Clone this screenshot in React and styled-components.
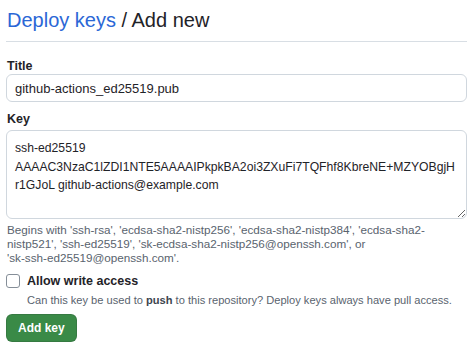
import React from "react";
import styled, { createGlobalStyle } from "styled-components";

const Global = createGlobalStyle`
  html, body { margin: 0; padding: 0; background: #ffffff; }
  body { font-family: "Liberation Sans", Arial, Helvetica, sans-serif; color: #1f2328; }
  * { box-sizing: border-box; }
`;

const Page = styled.div`
  width: 474px;
  padding: 0 7px 0 6px;
`;

const Header = styled.div`
  padding: 8px 0 9px 1px;
  border-bottom: 1px solid #d8dee4;
`;

const Heading = styled.h2`
  margin: 0;
  font-size: 20px;
  line-height: 24px;
  font-weight: 400;
  color: #1f2328;
`;

const Crumb = styled.a`
  color: #2b67d6;
  text-decoration: none;
`;

const Form = styled.form`
  display: flex;
  flex-direction: column;
  padding-top: 17px;
`;

const Group = styled.div`
  display: flex;
  flex-direction: column;
  margin-top: ${(p) => p.$top || 0}px;
`;

const Label = styled.label`
  font-size: 12.5px;
  line-height: 14px;
  font-weight: 700;
  color: #1f2328;
  padding-left: 1px;
  margin-bottom: ${(p) => p.$gap || 1}px;
`;

const TextInput = styled.input`
  height: 28px;
  width: 100%;
  padding: 0 8px;
  border: 1px solid #d0d7de;
  border-radius: 6px;
  background: #ffffff;
  font-family: inherit;
  font-size: 13px;
  color: #1f2328;
  outline: none;
`;

const TextArea = styled.textarea`
  display: block;
  width: 100%;
  height: 89px;
  padding: 8px 9px 8px 8px;
  border: 1px solid #d0d7de;
  border-radius: 6px;
  background: #ffffff;
  font-family: inherit;
  font-size: 12.2px;
  line-height: 18.5px;
  color: #1f2328;
  outline: none;
  resize: vertical;
  overflow: hidden;
`;

const Note = styled.p`
  margin: ${(p) => p.$top || 0}px 0 0 ${(p) => p.$indent || 1}px;
  font-size: ${(p) => p.$size || 11.7}px;
  line-height: 14px;
  color: #59636e;
  white-space: ${(p) => (p.$single ? "nowrap" : "normal")};
`;

const KeyName = styled.span`
  white-space: nowrap;
`;

const CheckRow = styled.label`
  display: flex;
  align-items: center;
  gap: 7px;
  margin-top: 8px;
  height: 16px;
`;

const Box = styled.input`
  appearance: none;
  margin: 0;
  width: 14px;
  height: 14px;
  border: 1px solid #858e98;
  border-radius: 3px;
  background: #ffffff;
`;

const CheckText = styled.span`
  font-size: 12.5px;
  line-height: 16px;
  font-weight: 700;
  color: #1f2328;
`;

const Strong = styled.strong`
  font-weight: 700;
  color: #3d454e;
`;

const Button = styled.button`
  align-self: flex-start;
  margin-top: 7px;
  height: 28px;
  padding: 0 11px;
  border: 1px solid rgba(31, 35, 40, 0.15);
  border-radius: 6px;
  background: #3a8a47;
  color: #ffffff;
  font-family: inherit;
  font-size: 12px;
  font-weight: 700;
`;

const keyValue =
  "ssh-ed25519 AAAAC3NzaC1lZDI1NTE5AAAAIPkpkBA2oi3ZXuFi7TQFhf8KbreNE+MZYOBgjHr1GJoL github-actions@example.com";

export default function App() {
  return (
    <>
      <Global />
      <Page>
        <Header>
          <Heading>
            <Crumb href="#">Deploy keys</Crumb> / Add new
          </Heading>
        </Header>
        <Form onSubmit={(e) => e.preventDefault()}>
          <Group>
            <Label htmlFor="title">Title</Label>
            <TextInput id="title" defaultValue="github-actions_ed25519.pub" />
          </Group>
          <Group $top={10}>
            <Label htmlFor="key" $gap={4}>Key</Label>
            <TextArea id="key" defaultValue={keyValue} spellCheck={false} />
            <Note $top={4}>
              Begins with <KeyName>'ssh-rsa',</KeyName> <KeyName>'ecdsa-sha2-nistp256',</KeyName>{" "}
              <KeyName>'ecdsa-sha2-nistp384',</KeyName> <KeyName>'ecdsa-sha2-</KeyName>
              <wbr />
              <KeyName>nistp521',</KeyName> <KeyName>'ssh-ed25519',</KeyName>{" "}
              <KeyName>'sk-ecdsa-sha2-nistp256@openssh.com',</KeyName> or{" "}
              <KeyName>'sk-ssh-ed25519@openssh.com'.</KeyName>
            </Note>
          </Group>
          <CheckRow>
            <Box type="checkbox" />
            <CheckText>Allow write access</CheckText>
          </CheckRow>
          <Note $top={4} $indent={21} $size={11.1} $single>
            Can this key be used to <Strong>push</Strong> to this repository? Deploy keys always have pull access.
          </Note>
          <Button type="submit">Add key</Button>
        </Form>
      </Page>
    </>
  );
}
